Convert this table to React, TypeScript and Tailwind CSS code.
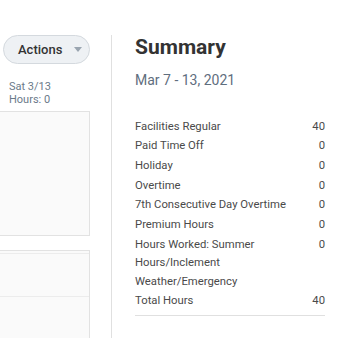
import React from 'react';

const rows = [
  { label: 'Facilities Regular', value: '40' },
  { label: 'Paid Time Off', value: '0' },
  { label: 'Holiday', value: '0' },
  { label: 'Overtime', value: '0' },
  { label: '7th Consecutive Day Overtime', value: '0' },
  { label: 'Premium Hours', value: '0' },
  { label: 'Hours Worked: Summer Hours/Inclement Weather/Emergency', value: '0' },
  { label: 'Total Hours', value: '40' },
];

export default function App() {
  return (
    <div className="w-[351px] h-[338px] overflow-hidden bg-white flex font-['Roboto',sans-serif]">
      {/* Left: the tail end of the timesheet week */}
      <div className="w-[111px] shrink-0 pt-[35px] pr-[21px] flex flex-col">
        <button className="shrink-0 ml-[3px] h-[29px] rounded-full border border-[#d4d9de] bg-[#eef1f4] flex items-center pl-[14px] pr-[12px] gap-[12px] text-[13px] font-medium text-[#333]">
          Actions
          <span className="w-0 h-0 border-l-[4px] border-r-[4px] border-t-[5px] border-l-transparent border-r-transparent border-t-[#9aa5b0]" />
        </button>

        <div className="shrink-0 pl-[9px] mt-[16px] text-[11px] leading-[13px] text-[#6b7a8a]">
          <div>Sat 3/13</div>
          <div>Hours: 0</div>
        </div>

        <div className="shrink-0 -ml-[10px] mt-[5px] h-[125px] border border-[#e2e2e2] bg-[#fafafa]" />

        <div className="shrink-0 -ml-[10px] mt-[14px] h-[120px] border border-[#e2e2e2] bg-[#fafafa]">
          <div className="h-[3px] border-b border-[#ececec]" />
          <div className="h-[43px] border-b border-[#ececec]" />
        </div>
      </div>

      {/* Right: weekly summary */}
      <div className="flex-1 mt-[35px] border-l border-[#e0e0e0] pl-[23px] pr-[26px]">
        <h1 className="text-[21px] leading-[24px] font-bold text-[#333]">Summary</h1>
        <p className="mt-[11px] text-[14px] leading-[20px] text-[#5f6e7e]">Mar 7 - 13, 2021</p>

        <div className="mt-[27px] pb-[3px] border-b border-[#e0e0e0]">
          {rows.map((row) => (
            <div key={row.label} className="flex justify-between py-[0.6px] text-[11.3px] leading-[18.5px] text-[#4a4a4a]">
              <span className="pr-4">{row.label}</span>
              <span>{row.value}</span>
            </div>
          ))}
        </div>
      </div>
    </div>
  );
}
